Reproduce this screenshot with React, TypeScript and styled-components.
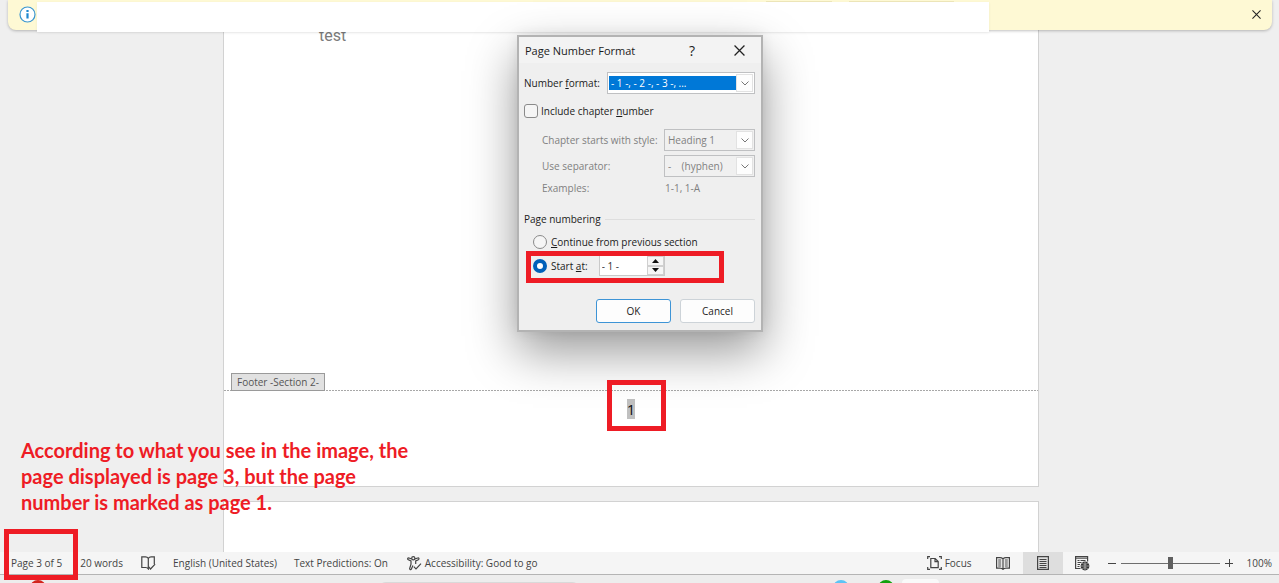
import React, { useState } from "react";
import styled, { createGlobalStyle, css } from "styled-components";

const GlobalStyle = createGlobalStyle`
  *, *::before, *::after { box-sizing: border-box; }
  body { margin: 0; background: #efefef; }
  body, button, input, select { font-family: "Open Sans", "Noto Sans", sans-serif; font-size: 10px; }
`;

const RED = "#ee1c25";

const Shell = styled.div`
  position: relative;
  display: flex;
  flex-direction: column;
  height: 100vh;
  overflow: hidden;
  color: #222;
`;

/* ---------- notice bar ---------- */
const Notice = styled.header`
  position: relative;
  z-index: 2;
  display: flex;
  align-items: flex-start;
  flex: none;
  height: 30px;
  margin: 0 7px 0 8px;
  background: #fef9d4;
  border-radius: 0 0 8px 8px;
  box-shadow: 0 1px 3px rgba(0, 0, 0, 0.25);
`;

const NoticeIcon = styled.span`
  display: flex;
  width: 29px;
  padding: 6px 0 0 11px;
`;

const NoticeBody = styled.div`
  flex: 952 1 0;
`;

const NoticeEdges = styled.div`
  display: flex;
  justify-content: flex-end;
  gap: 17px;
  height: 2px;
  padding: 1px 35px 0 0;
`;

const NoticeEdge = styled.span<{ $width: number }>`
  width: ${(p) => p.$width}px;
  background: #ece5b8;
`;

const NoticeCover = styled.div`
  height: 30px;
  background: #fff;
  box-shadow: 0 1px 3px rgba(0, 0, 0, 0.06);
`;

const NoticeEnd = styled.div`
  display: flex;
  flex: 277 1 0;
  justify-content: flex-end;
  padding: 4px 6px 0 0;
`;

const IconButton = styled.button`
  display: flex;
  align-items: center;
  justify-content: center;
  width: 20px;
  height: 20px;
  padding: 0;
  border: 0;
  background: none;
  color: #222;
`;

/* ---------- document ---------- */
const Workspace = styled.main`
  position: relative;
  display: flex;
  flex: 1 1 0;
  flex-direction: column;
  align-items: center;
  gap: 14px;
  min-height: 0;
  margin-top: -10px;
  padding-right: 17px;
  overflow: hidden;
`;

const Page = styled.section`
  display: flex;
  flex: none;
  flex-direction: column;
  width: 100%;
  max-width: 816px;
  border: 1px solid #d2d2d2;
  background: #fff;
`;

const FirstPage = styled(Page)`
  height: 467px;
  border-top: 0;
`;

const NextPage = styled(Page)`
  height: 400px;
`;

const PageText = styled.p`
  flex: 1;
  margin: 0;
  padding: 6px 95px 0;
  color: #7b7b7b;
  font-family: Roboto, "Liberation Sans", sans-serif;
  font-size: 16px;
  line-height: 20px;
`;

const FooterTag = styled.div`
  position: relative;
  z-index: 1;
  align-self: flex-start;
  height: 18px;
  margin: 0 0 -1px 7px;
  padding: 0 5px;
  border: 1px solid #9a9a9a;
  background: #e1e1e1;
  color: #555;
  line-height: 16px;
`;

const FooterArea = styled.footer`
  display: flex;
  flex-direction: column;
  align-items: center;
  height: 96px;
`;

const FooterRule = styled.div`
  width: 100%;
  height: 1px;
  margin-bottom: 8px;
  background: repeating-linear-gradient(90deg, #a8a8a8 0 2px, #fff 2px 3px);
`;

const PageNumber = styled.span`
  position: relative;
  height: 20px;
  background: #c0c0c0;
  color: #111;
  font-size: 15px;
  line-height: 20px;
`;

const Note = styled.p`
  position: absolute;
  left: 21px;
  top: 417px;
  width: 400px;
  margin: 0;
  color: ${RED};
  font-family: Lato, "Open Sans", sans-serif;
  font-size: 20px;
  font-weight: 700;
  line-height: 26px;
`;

/* Red rectangle drawn over whatever it calls out. */
const Marker = styled.span<{ $inset: string }>`
  position: absolute;
  z-index: 4;
  inset: ${(p) => p.$inset};
  border: 5px solid ${RED};
  pointer-events: none;
`;

/* ---------- dialog ---------- */
const DialogLayer = styled.div`
  position: absolute;
  z-index: 3;
  inset: 0;
  display: flex;
  align-items: flex-start;
  justify-content: center;
  padding: 35px 0 0 1px;
  pointer-events: none;
`;

const Dialog = styled.form`
  width: 246px;
  border: 2px solid #b3b3b3;
  background: #efefef;
  box-shadow: 0 20px 46px rgba(0, 0, 0, 0.4), 0 0 12px rgba(0, 0, 0, 0.08);
  color: #1b1b1b;
  pointer-events: auto;
`;

const TitleBar = styled.div`
  display: flex;
  align-items: center;
  height: 26px;
  padding: 0 12px 0 6px;
  background: #f3f3f3;
`;

const Title = styled.h1`
  flex: 1;
  margin: 0;
  font-size: 11px;
  font-weight: 400;
`;

const TitleButton = styled(IconButton)`
  margin-left: 27px;
  font-size: 14px;

  &:first-of-type { margin-left: 0; }
`;

const DialogBody = styled.div`
  display: flex;
  flex-direction: column;
  padding: 9px 6px 7px 5px;
`;

const Row = styled.div<{ $height: number; $top?: number; $indent?: number; $muted?: boolean }>`
  position: relative;
  display: flex;
  align-items: center;
  height: ${(p) => p.$height}px;
  margin-top: ${(p) => p.$top ?? 0}px;
  padding-left: ${(p) => p.$indent ?? 0}px;
  ${(p) => p.$muted && css`color: #808080;`}
`;

const FieldLabel = styled.label`
  flex: 1;
  white-space: nowrap;
`;

const SelectFrame = styled.span<{ $width: number; $active?: boolean }>`
  display: flex;
  width: ${(p) => p.$width}px;
  height: 22px;
  padding: 1px;
  border: 1px solid #bfc0c2;
  background: ${(p) => (p.$active ? "#fff" : "#f0f0f0")};
`;

const SelectBox = styled.select<{ $active?: boolean }>`
  flex: 1;
  min-width: 0;
  height: ${(p) => (p.$active ? 14 : 18)}px;
  margin: ${(p) => (p.$active ? 2 : 0)}px 0;
  padding: 0 2px;
  border: 0;
  border-radius: 0;
  appearance: none;
  background: ${(p) => (p.$active ? "#0078d7" : "transparent")};
  color: ${(p) => (p.$active ? "#fff" : "#808080")};
  opacity: 1;
  white-space: pre;
`;

const SelectArrow = styled.span`
  display: flex;
  align-items: center;
  justify-content: center;
  width: 17px;
  border: 1px solid #e2e2e2;
  background: #fdfdfd;
`;

const SampleText = styled.span`
  width: 90px;
`;

const CheckBox = styled.input`
  width: 14px;
  height: 14px;
  margin: 0 3px 0 0;
  border: 1px solid #8a8a8a;
  border-radius: 3px;
  appearance: none;
  background: #f5f5f5;

  &:checked { background: #005fb8; }
`;

const Radio = styled.input`
  width: 14px;
  height: 14px;
  margin: 0 4px 0 0;
  border: 1px solid #8a8a8a;
  border-radius: 50%;
  appearance: none;
  background: #f5f5f5;

  &:checked { border: 4px solid #0060b9; background: #fff; }
`;

const GroupLabel = styled.span`
  margin-right: 4px;
`;

const GroupRule = styled.span`
  flex: 1;
  height: 1px;
  background: #dedede;
`;

const Spinner = styled.span`
  display: flex;
  width: 66px;
  height: 21px;
  margin-left: 11px;
  border: 1px solid #c9c9c9;
  background: #fff;
`;

const SpinnerInput = styled.input`
  flex: 1;
  min-width: 0;
  padding: 0 2px;
  border: 0;
  background: none;
  color: #333;
`;

const SpinnerKeys = styled.span`
  display: flex;
  flex-direction: column;
  width: 17px;
`;

const SpinnerKey = styled.button`
  display: flex;
  flex: 1;
  align-items: center;
  justify-content: center;
  padding: 0;
  border: 1px solid #d0d0d0;
  background: #f6f6f6;
`;

const Actions = styled.div`
  display: flex;
  justify-content: flex-end;
  gap: 9px;
  margin-top: 23px;
`;

const ActionButton = styled.button<{ $primary?: boolean }>`
  width: 75px;
  height: 24px;
  padding: 0;
  border: 1px solid ${(p) => (p.$primary ? "#3d94d6" : "#cdd3d8")};
  border-radius: 3px;
  background: #fdfdfd;
  color: #1b1b1b;
`;

/* ---------- status bar ---------- */
const StatusBar = styled.footer`
  position: relative;
  display: flex;
  flex: none;
  align-items: center;
  justify-content: space-between;
  height: 23px;
  padding: 0 7px 0 11px;
  border-bottom: 1px solid #b4b4b4;
  background: #f5f5f5;
  color: #444;
  white-space: nowrap;
`;

const StatusGroup = styled.div`
  display: flex;
  align-items: center;
  height: 22px;
`;

const StatusItem = styled.button<{ $gap?: number }>`
  position: relative;
  display: flex;
  align-items: center;
  gap: 3px;
  height: 22px;
  margin-left: ${(p) => p.$gap ?? 0}px;
  padding: 0;
  border: 0;
  background: none;
  color: inherit;
`;

const ViewButton = styled(StatusItem)<{ $on?: boolean }>`
  justify-content: center;
  width: 40px;
  background: ${(p) => (p.$on ? "#dedede" : "transparent")};
`;

const Zoom = styled.input`
  width: 99px;
  height: 12px;
  margin: 0 5px;
  appearance: none;
  background: linear-gradient(#6e6e6e, #6e6e6e) center / 100% 1px no-repeat;

  &::-webkit-slider-thumb {
    width: 5px;
    height: 12px;
    appearance: none;
    background: #5f5f5f;
  }
`;

/* ---------- strip below the window ---------- */
const Strip = styled.div`
  display: flex;
  flex: none;
  align-items: flex-start;
  height: 8px;
  overflow: hidden;
  background: #ededed;
`;

const Dot = styled.span<{ $color: string; $left: number }>`
  flex: none;
  width: 16px;
  height: 16px;
  margin: 5px 0 0 ${(p) => p.$left}px;
  border-radius: 50%;
  background: ${(p) => p.$color};
`;

const Pill = styled.span`
  flex: none;
  width: 202px;
  height: 16px;
  margin: 7px 0 0 332px;
  border-radius: 8px;
  background: #d9d9d9;
`;

const Tab = styled.span`
  width: 37px;
  height: 16px;
  margin: 4px 0 0 8px;
  border-radius: 4px;
  background: #f9f9f9;
`;

/* ---------- drawings ---------- */
const stroke = { fill: "none", stroke: "currentColor", strokeWidth: 1 } as const;

const InfoIcon = () => (
  <svg width="17" height="17" viewBox="0 0 17 17">
    <circle cx="8.5" cy="8.5" r="7.5" fill="#fff" stroke="#3a96d0" strokeWidth="1.2" />
    <path d="M8.5 4v2M8.5 7.2v5.3" stroke="#1e88d0" strokeWidth="2.2" />
  </svg>
);

const Cross = ({ size }: { size: number }) => (
  <svg width={size} height={size} viewBox="0 0 10 10">
    <path d="M.5.5l9 9M9.5.5l-9 9" fill="none" stroke="currentColor" strokeWidth="1.15" />
  </svg>
);

const Chevron = () => (
  <svg width="8" height="5" viewBox="0 0 8 5">
    <path d="M.5.5L4 4 7.5.5" fill="none" stroke="#777" />
  </svg>
);

const Triangle = ({ down }: { down?: boolean }) => (
  <svg width="7" height="4" viewBox="0 0 7 4">
    <path d={down ? "M0 0h7L3.5 4z" : "M0 4h7L3.5 0z"} fill="#111" />
  </svg>
);

const ProofIcon = () => (
  <svg width="15" height="14" viewBox="0 0 15 14" {...stroke} strokeWidth={1.2}>
    <path d="M7.3 2.3C6.5 1.2 5.5.9 4.5.9H.8v10.600h3.900c1 0 1.900.4 2.600 1.400V2.300C8.100 1.200 9.100.9 10.100.9h3.200v7" />
    <path d="M7.500 10.700l2 2.300 4.600-4.800" />
  </svg>
);

const AccessIcon = () => (
  <svg width="15" height="15" viewBox="0 0 15 15" {...stroke} strokeWidth={1.2}>
    <circle cx="6.300" cy="2.300" r="1.600" />
    <path d="M4.600 2.900L1.900 2C.7 1.700.2 3.200 1.300 3.700l2.700 1.200v3.200L2.700 12.400c-.3 1.300 1.200 1.800 1.700.7l1.500-3.500" />
    <path d="M8 2.900l2.800-.9c1.200-.3 1.700 1.200.6 1.700L8.700 4.900v3" />
    <path d="M6.800 10.600l2.200 2.300 5-5.300" />
  </svg>
);

const FocusIcon = () => (
  <svg width="15" height="14" viewBox="0 0 15 14" {...stroke} strokeWidth={1.2}>
    <path d="M3 .7H.7V3M12 .7h2.300V3M3 13.300H.7V11M12 13.300h2.300V11" />
    <path d="M3.800 2.500h4.400l3 3v6.200H3.800zM8 2.500v3.200h3.200" />
  </svg>
);

const ReadIcon = () => (
  <svg width="14" height="13" viewBox="0 0 14 13" {...stroke}>
    <path d="M7 1.800C6 .9 5 .6 4 .6H.6v10.500H4c1.200 0 2.200.3 3 1.300.8-1 1.800-1.300 3-1.300h3.400V.6H10c-1 0-2 .3-3 1.200zv10.500" strokeWidth="1.2" />
    <path d="M2.200 3h3M2.200 5h3M2.200 7h3M2.200 9h3M8.800 3h3M8.800 5h3M8.800 7h3M8.800 9h3" />
  </svg>
);

const PrintIcon = () => (
  <svg width="12" height="14" viewBox="0 0 12 14" {...stroke}>
    <path d="M.6.6h10.800v12.800H.6z" strokeWidth="1.2" />
    <path d="M2.500 3.500h7M2.500 5.500h7M2.500 7.500h7M2.500 9.500h7M2.500 11.500h7" />
  </svg>
);

const WebIcon = () => (
  <svg width="15" height="15" viewBox="0 0 15 15" {...stroke}>
    <path d="M5.500 12.500H.6V.6h12v5" strokeWidth="1.2" />
    <path d="M.6 2.200h12M2.500 4.500h2M5.500 4.500h5M2.500 6.500h4M2.500 8.500h2.500M2.500 10.500h2" />
    <circle cx="10" cy="10" r="4.400" fill="#333" stroke="none" />
    <path d="M5.800 10h8.400M10 5.800v8.400M7.300 7.300c1.800 1.200 3.600 1.200 5.400 0M7.300 12.700c1.800-1.200 3.600-1.200 5.400 0" stroke="#ddd" strokeWidth=".6" />
  </svg>
);

const Minus = () => (
  <svg width="8" height="8" viewBox="0 0 8 8" {...stroke}><path d="M0 4.500h8" /></svg>
);
const Plus = () => (
  <svg width="8" height="8" viewBox="0 0 8 8" {...stroke}><path d="M0 4.500h8M4.500 0v8" /></svg>
);

export default function App() {
  const [mode, setMode] = useState("start");
  const [start, setStart] = useState(1);
  const [zoom, setZoom] = useState(100);

  return (
    <Shell>
      <GlobalStyle />
      <Notice>
        <NoticeIcon><InfoIcon /></NoticeIcon>
        <NoticeBody>
          <NoticeEdges>
            <NoticeEdge $width={66} />
            <NoticeEdge $width={105} />
          </NoticeEdges>
          <NoticeCover />
        </NoticeBody>
        <NoticeEnd>
          <IconButton aria-label="Close message"><Cross size={9} /></IconButton>
        </NoticeEnd>
      </Notice>

      <Workspace>
        <FirstPage>
          <PageText>test</PageText>
          <FooterTag>Footer -Section 2-</FooterTag>
          <FooterArea>
            <FooterRule />
            <PageNumber>
              1
              <Marker $inset="-19px -31px -12px -20px" />
            </PageNumber>
          </FooterArea>
        </FirstPage>
        <NextPage />
        <Note>
          According to what you see in the image, the page displayed is page 3, but the page
          number is marked as page 1.
        </Note>
      </Workspace>

      <StatusBar>
        <StatusGroup>
          <StatusItem>
            Page 3 of 5
            <Marker $inset="-23px -16px -6px -7px" />
          </StatusItem>
          <StatusItem $gap={18}>20 words</StatusItem>
          <StatusItem $gap={18} aria-label="Proofing"><ProofIcon /></StatusItem>
          <StatusItem $gap={17}>English (United States)</StatusItem>
          <StatusItem $gap={17}>Text Predictions: On</StatusItem>
          <StatusItem $gap={19}><AccessIcon />Accessibility: Good to go</StatusItem>
        </StatusGroup>
        <StatusGroup>
          <StatusItem><FocusIcon />Focus</StatusItem>
          <ViewButton $gap={11} aria-label="Read mode"><ReadIcon /></ViewButton>
          <ViewButton $on aria-label="Print layout"><PrintIcon /></ViewButton>
          <ViewButton aria-label="Web layout"><WebIcon /></ViewButton>
          <StatusItem $gap={5} aria-label="Zoom out"><Minus /></StatusItem>
          <Zoom
            type="range"
            aria-label="Zoom"
            min={0}
            max={200}
            value={zoom}
            onChange={(e) => setZoom(Number(e.target.value))}
          />
          <StatusItem aria-label="Zoom in"><Plus /></StatusItem>
          <StatusItem $gap={14}>{zoom}%</StatusItem>
        </StatusGroup>
      </StatusBar>

      <Strip>
        <Dot $color="#d3241c" $left={30} />
        <Pill />
        <Dot $color="#5cc3f5" $left={253} />
        <Dot $color="#13a10e" $left={29} />
        <Tab />
      </Strip>

      <DialogLayer>
        <Dialog role="dialog" aria-labelledby="dialog-title" onSubmit={(e) => e.preventDefault()}>
          <TitleBar>
            <Title id="dialog-title">Page Number Format</Title>
            <TitleButton type="button" aria-label="Help">?</TitleButton>
            <TitleButton type="button" aria-label="Close"><Cross size={11} /></TitleButton>
          </TitleBar>
          <DialogBody>
            <Row $height={22}>
              <FieldLabel htmlFor="format">Number <u>f</u>ormat:</FieldLabel>
              <SelectFrame $width={148} $active>
                <SelectBox id="format" $active>
                  <option>- 1 -, - 2 -, - 3 -, ...</option>
                </SelectBox>
                <SelectArrow><Chevron /></SelectArrow>
              </SelectFrame>
            </Row>
            <Row $height={18} $top={8}>
              <CheckBox type="checkbox" id="chapter" />
              <label htmlFor="chapter">Include chapter <u>n</u>umber</label>
            </Row>
            <Row $height={22} $top={9} $indent={18} $muted>
              <FieldLabel htmlFor="style">Chapter starts with style:</FieldLabel>
              <SelectFrame $width={91}>
                <SelectBox id="style" disabled><option>Heading 1</option></SelectBox>
                <SelectArrow><Chevron /></SelectArrow>
              </SelectFrame>
            </Row>
            <Row $height={22} $top={4} $indent={18} $muted>
              <FieldLabel htmlFor="separator">Use separator:</FieldLabel>
              <SelectFrame $width={91}>
                <SelectBox id="separator" disabled>
                  <option>{"-\u00a0\u00a0\u00a0\u00a0(hyphen)"}</option>
                </SelectBox>
                <SelectArrow><Chevron /></SelectArrow>
              </SelectFrame>
            </Row>
            <Row $height={14} $top={4} $indent={18} $muted>
              <FieldLabel as="span">Examples:</FieldLabel>
              <SampleText>1-1, 1-A</SampleText>
            </Row>
            <Row $height={16} $top={16}>
              <GroupLabel>Page numbering</GroupLabel>
              <GroupRule />
            </Row>
            <Row $height={16} $top={7} $indent={9}>
              <Radio
                type="radio"
                name="numbering"
                id="continue"
                checked={mode === "continue"}
                onChange={() => setMode("continue")}
              />
              <label htmlFor="continue"><u>C</u>ontinue from previous section</label>
            </Row>
            <Row $height={21} $top={5} $indent={9}>
              <Radio
                type="radio"
                name="numbering"
                id="start"
                checked={mode === "start"}
                onChange={() => setMode("start")}
              />
              <label htmlFor="start">Start <u>a</u>t:</label>
              <Spinner>
                <SpinnerInput aria-label="Start at" value={`- ${start} -`} readOnly />
                <SpinnerKeys>
                  <SpinnerKey type="button" aria-label="Increase" onClick={() => setStart(start + 1)}>
                    <Triangle />
                  </SpinnerKey>
                  <SpinnerKey type="button" aria-label="Decrease" onClick={() => setStart(Math.max(0, start - 1))}>
                    <Triangle down />
                  </SpinnerKey>
                </SpinnerKeys>
              </Spinner>
              <Marker $inset="-4px 31px -7px 2px" />
            </Row>
            <Actions>
              <ActionButton type="submit" $primary>OK</ActionButton>
              <ActionButton type="button">Cancel</ActionButton>
            </Actions>
          </DialogBody>
        </Dialog>
      </DialogLayer>
    </Shell>
  );
}
